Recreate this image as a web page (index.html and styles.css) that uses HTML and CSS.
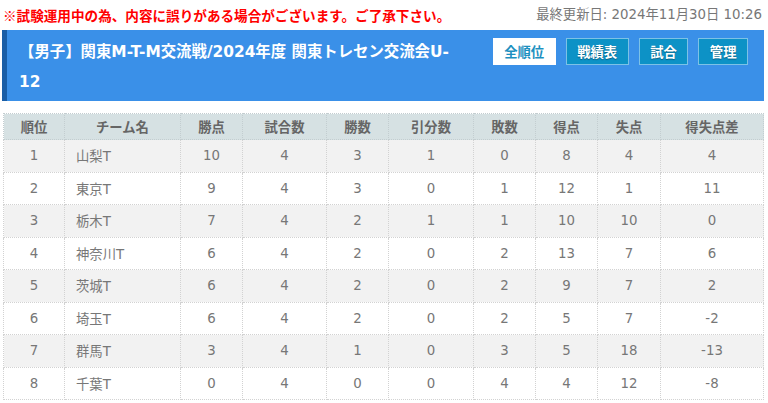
FILE: index.html
```html
<!DOCTYPE html>
<html lang="ja">
<head>
<meta charset="utf-8">
<title>順位表</title>
<link rel="stylesheet" href="styles.css">
</head>
<body>
<div class="page">
  <div class="topline">
    <p class="notice">※試験運用中の為、内容に誤りがある場合がございます。ご了承下さい。</p>
    <p class="updated">最終更新日: 2024年11月30日 10:26</p>
  </div>
  <div class="headbar">
    <h1 class="title">【男子】関東M-T-M交流戦/2024年度 関東トレセン交流会U-12</h1>
    <nav class="btns">
      <a class="btn active">全順位</a>
      <a class="btn">戦績表</a>
      <a class="btn">試合</a>
      <a class="btn">管理</a>
    </nav>
  </div>
  <table class="standings">
    <colgroup>
      <col class="c1"><col class="c2"><col class="c3"><col class="c4"><col class="c5">
      <col class="c6"><col class="c7"><col class="c8"><col class="c9"><col class="c10">
    </colgroup>
    <thead>
      <tr><th>順位</th><th>チーム名</th><th>勝点</th><th>試合数</th><th>勝数</th><th>引分数</th><th>敗数</th><th>得点</th><th>失点</th><th>得失点差</th></tr>
    </thead>
    <tbody>
      <tr><td>1</td><td class="name">山梨T</td><td>10</td><td>4</td><td>3</td><td>1</td><td>0</td><td>8</td><td>4</td><td>4</td></tr>
      <tr><td>2</td><td class="name">東京T</td><td>9</td><td>4</td><td>3</td><td>0</td><td>1</td><td>12</td><td>1</td><td>11</td></tr>
      <tr><td>3</td><td class="name">栃木T</td><td>7</td><td>4</td><td>2</td><td>1</td><td>1</td><td>10</td><td>10</td><td>0</td></tr>
      <tr><td>4</td><td class="name">神奈川T</td><td>6</td><td>4</td><td>2</td><td>0</td><td>2</td><td>13</td><td>7</td><td>6</td></tr>
      <tr><td>5</td><td class="name">茨城T</td><td>6</td><td>4</td><td>2</td><td>0</td><td>2</td><td>9</td><td>7</td><td>2</td></tr>
      <tr><td>6</td><td class="name">埼玉T</td><td>6</td><td>4</td><td>2</td><td>0</td><td>2</td><td>5</td><td>7</td><td>-2</td></tr>
      <tr><td>7</td><td class="name">群馬T</td><td>3</td><td>4</td><td>1</td><td>0</td><td>3</td><td>5</td><td>18</td><td>-13</td></tr>
      <tr><td>8</td><td class="name">千葉T</td><td>0</td><td>4</td><td>0</td><td>0</td><td>4</td><td>4</td><td>12</td><td>-8</td></tr>
    </tbody>
  </table>
</div>
</body>
</html>
```
FILE: styles.css
```css
* { box-sizing: border-box; }
html, body { margin: 0; padding: 0; background: #fff; }
body {
  font-family: "DejaVu Sans", "Noto Sans CJK JP", sans-serif;
  font-size: 13.33px;
  color: #777;
}
.page { padding: 0 4px 0 2px; }

.topline {
  display: flex;
  justify-content: space-between;
  align-items: center;
  height: 30px;
  padding: 0 0 0 1px;
}
.topline p { margin: 0; line-height: 20px; }
.notice { color: #f00; font-weight: bold; font-family: "Noto Sans CJK JP", sans-serif; font-size: 13.6px; }
.updated { color: #777; padding-right: 2px; }

.headbar {
  display: flex;
  align-items: flex-start;
  justify-content: space-between;
  background: #3a90e8;
  border-left: 5px solid #1a5ea6;
  padding: 7px 16px 4px 12px;
}
.title {
  margin: 0;
  flex: 0 0 434px;
  color: #fff;
  font-size: 15.4px;
  font-weight: bold;
  line-height: 30px;
  word-break: break-all;
}
.btns { display: flex; gap: 10px; padding-top: 1px; }
.btn {
  display: flex;
  align-items: center;
  justify-content: center;
  height: 27px;
  padding: 0 10.5px;
  background: #0d92c6;
  border: 1px solid #7cc2e6;
  color: #fff;
  font-weight: bold;
  font-family: "Noto Sans CJK JP", sans-serif;
  text-shadow: 0 1px 1px rgba(0,0,0,.35);
}
.btn.active {
  background: #fff;
  border-color: #fff;
  color: #1d90c0;
  text-shadow: none;
}

.standings {
  margin: 12px 0 0 1px;
  width: 760px;
  border-collapse: collapse;
  table-layout: fixed;
}
.c1 { width: 61px; } .c2 { width: 116px; } .c3 { width: 62px; } .c4 { width: 84px; }
.c5 { width: 62px; } .c6 { width: 85px; } .c7 { width: 62px; } .c8 { width: 62px; }
.c9 { width: 63px; } .c10 { width: 103px; }

.standings th {
  background: #d6e1e3;
  color: #666;
  font-weight: bold;
  font-family: "Noto Sans CJK JP", sans-serif;
  height: 26px;
  padding: 0;
  border: 1px dotted #c3cdd0;
  text-align: center;
}
.standings td {
  height: 32.5px;
  padding: 0;
  text-align: center;
  border: 1px dotted #d2d2d2;
  color: #777;
}
.standings tbody tr:nth-child(odd) td { background: #f2f2f2; }
.standings td.name { text-align: left; padding-left: 11px; }
```
